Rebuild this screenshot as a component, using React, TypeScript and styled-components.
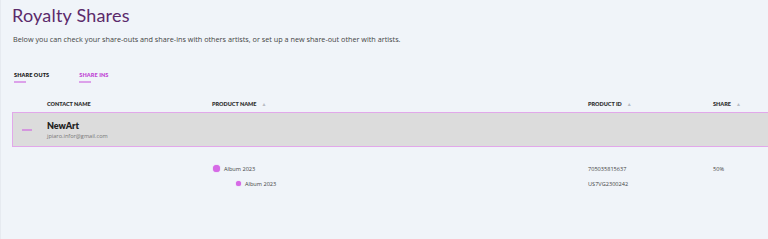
import React from "react";
import styled, { createGlobalStyle } from "styled-components";

const Global = createGlobalStyle`
  html, body { margin: 0; padding: 0; background: #f0f4f9; }
  body { font-family: "Open Sans", "Lato", sans-serif; }
`;

const Page = styled.div`
  width: 768px;
  height: 239px;
  box-sizing: border-box;
  padding: 0 0 0 11px;
  overflow: hidden;
  border-left: 1px solid #e6eaf0;
`;

const Title = styled.h1`
  margin: 0;
  padding-top: 3px;
  font-family: "Lato", sans-serif;
  font-weight: 400;
  font-size: 18px;
  line-height: 25px;
  color: #5b2a6b;
  letter-spacing: 0.2px;
`;

const Subtitle = styled.p`
  margin: 6px 0 0 1px;
  font-family: "Open Sans", sans-serif;
  font-size: 7.25px;
  line-height: 10px;
  color: #444;
`;

const Tabs = styled.div`
  display: flex;
  gap: 30px;
  margin: 27px 0 0 2px;
  height: 14px;
`;

const Tab = styled.div<{ $active?: boolean }>`
  font-family: "Lato", sans-serif;
  font-weight: 800;
  font-size: 5.5px;
  line-height: 8px;
  letter-spacing: 0.1px;
  color: ${(p) => (p.$active ? "#c24ad6" : "#222")};
  display: flex;
  flex-direction: column;
  &::after {
    content: "";
    display: block;
    width: 12px;
    height: 2px;
    margin-top: 2px;
    background: #cf6be0;
    transform: scaleY(0.6);
  }
`;

const cols = "35px 165px 376px 125px 1fr";

const HeaderRow = styled.div`
  display: grid;
  grid-template-columns: ${cols};
  height: 12px;
  margin-top: 13px;
  align-items: center;
`;

const HeadCell = styled.div`
  font-family: "Lato", sans-serif;
  font-weight: 800;
  font-size: 5.5px;
  color: #333;
  display: flex;
  align-items: center;
  gap: 5px;
`;

const SortArrow = styled.span`
  font-size: 5px;
  color: #b8bcc4;
`;

const ContactRow = styled.div`
  display: grid;
  grid-template-columns: ${cols};
  height: 35px;
  margin-top: 2px;
  margin-right: -20px;
  background: #dcdcdc;
  box-shadow: inset 0 0 0 1px #e2a8ea;
  align-items: center;
`;

const Dash = styled.div`
  width: 10px;
  height: 2px;
  background: #cf6be0;
  transform: scaleY(0.6);
  margin-left: 10px;
`;

const ContactInfo = styled.div`
  display: flex;
  flex-direction: column;
  gap: 1px;
`;

const Name = styled.div`
  font-family: "Lato", sans-serif;
  font-weight: 800;
  font-size: 9px;
  line-height: 11px;
  color: #222;
`;

const Email = styled.div`
  font-family: "Open Sans", sans-serif;
  font-size: 5.6px;
  line-height: 8px;
  color: #777;
`;

const SubRow = styled.div<{ $first?: boolean }>`
  display: grid;
  grid-template-columns: ${cols};
  height: 15px;
  align-items: center;
  margin-top: ${(p) => (p.$first ? "14px" : "0")};
`;

const ProductCell = styled.div<{ $indent: number }>`
  display: flex;
  align-items: center;
  gap: 4px;
  padding-left: ${(p) => p.$indent}px;
`;

const Dot = styled.span<{ $size: number }>`
  width: ${(p) => p.$size}px;
  height: ${(p) => p.$size}px;
  border-radius: 50%;
  background: #d66ae6;
  box-shadow: 0 0 1px #d66ae6;
  flex: none;
`;

const Text = styled.div`
  font-family: "Open Sans", sans-serif;
  font-size: 5.6px;
  color: #444;
`;

export default function App() {
  return (
    <>
      <Global />
      <Page>
        <Title>Royalty Shares</Title>
        <Subtitle>
          Below you can check your share-outs and share-ins with others artists, or set up a new
          share-out other with artists.
        </Subtitle>
        <Tabs>
          <Tab>SHARE OUTS</Tab>
          <Tab $active>SHARE INS</Tab>
        </Tabs>
        <HeaderRow>
          <div />
          <HeadCell>CONTACT NAME</HeadCell>
          <HeadCell>
            PRODUCT NAME <SortArrow>▲</SortArrow>
          </HeadCell>
          <HeadCell>
            PRODUCT ID <SortArrow>▲</SortArrow>
          </HeadCell>
          <HeadCell>
            SHARE <SortArrow>▲</SortArrow>
          </HeadCell>
        </HeaderRow>
        <ContactRow>
          <Dash />
          <ContactInfo>
            <Name>NewArt</Name>
            <Email>jpiaro.infor@gmail.com</Email>
          </ContactInfo>
          <div />
          <div />
          <div />
        </ContactRow>
        <SubRow $first>
          <div />
          <div />
          <ProductCell $indent={1}>
            <Dot $size={7} />
            <Text>Album 2023</Text>
          </ProductCell>
          <Text>705035815637</Text>
          <Text>50%</Text>
        </SubRow>
        <SubRow>
          <div />
          <div />
          <ProductCell $indent={24}>
            <Dot $size={5} />
            <Text>Album 2023</Text>
          </ProductCell>
          <Text>US7VG2300242</Text>
          <div />
        </SubRow>
      </Page>
    </>
  );
}
